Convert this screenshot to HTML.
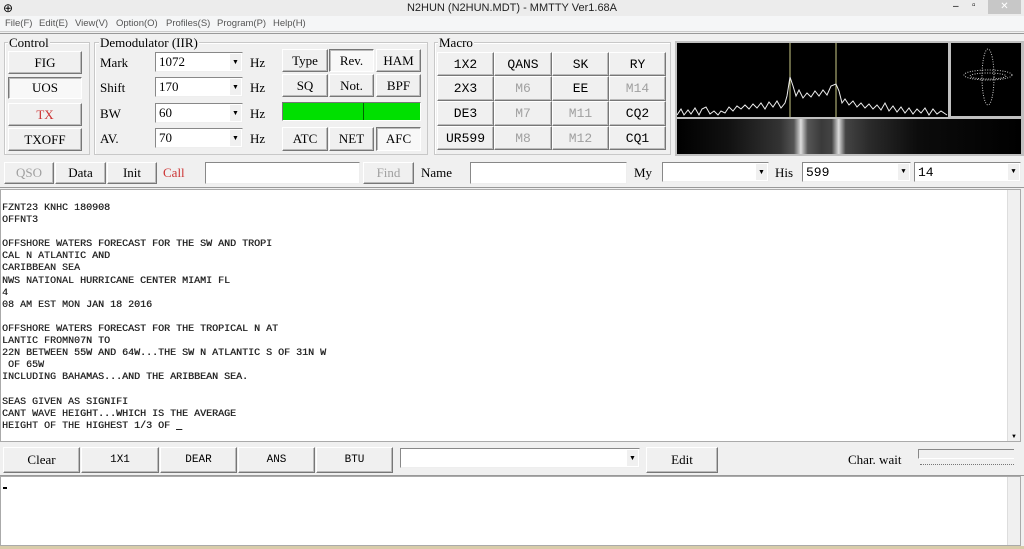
<!DOCTYPE html>
<html><head><style>
*{box-sizing:border-box;margin:0;padding:0}
body{width:1024px;height:549px;overflow:hidden;background:#f0f0f0;font-family:"Liberation Serif",serif;font-size:13px;color:#000;position:relative}
.a{position:absolute}
.btn{position:absolute;background:#f0f0f0;border:1px solid;border-color:#fff #777 #777 #fff;box-shadow:inset -1px -1px 0 #bbb;display:flex;align-items:center;justify-content:center;font-size:13px}
.dn{background:#f8f8f8;border-color:#777 #fff #fff #777;box-shadow:inset 1px 1px 0 #bbb}
.mono{font-family:"Liberation Mono",monospace}
.gr{color:#a0a0a0}
.grp{position:absolute;border:1px solid #c8c8c8;box-shadow:1px 1px 0 #fff inset}
.gl{position:absolute;background:#f0f0f0;font-size:13px;padding:0 1px;line-height:13px}
.inp{position:absolute;background:#fff;border:1px solid;border-color:#888 #eee #eee #888;font-size:13px;padding-left:3px;display:flex;align-items:center}
.ar{position:absolute;right:1px;top:1px;bottom:1px;width:11px;background:#f0f0f0;font-size:7px;display:flex;align-items:center;justify-content:center}
pre{font-family:"Liberation Mono",monospace;font-size:10px;line-height:12.1px;color:#222;text-shadow:0.3px 0 0 #444}
</style></head><body>
<div class="a" style="left:0;top:0;width:1024px;height:16px;background:#ececec;font-family:'Liberation Sans',sans-serif;font-size:11px">
<div class="a" style="left:3px;top:1px;font-size:12px">⊕</div>
<div class="a" style="left:0;width:1024px;top:2px;text-align:center;color:#222">N2HUN (N2HUN.MDT) - MMTTY Ver1.68A</div>
<div class="a" style="left:953px;top:1px;font-size:10px">–</div>
<div class="a" style="left:972px;top:0px;font-size:10px">▫</div>
<div class="a" style="left:988px;top:0;width:33px;height:14px;background:#c7c7c7;color:#fff;text-align:center;font-size:10px;line-height:14px">✕</div>
</div>
<div class="a" style="left:0;top:16px;width:1024px;height:16px;background:#f5f6f7;border-bottom:1px solid #ccc;font-family:'Liberation Sans',sans-serif;font-size:9.5px;color:#555;line-height:15px">
<span class="a" style="left:5px">File(F)</span><span class="a" style="left:39px">Edit(E)</span><span class="a" style="left:75px">View(V)</span><span class="a" style="left:116px">Option(O)</span><span class="a" style="left:166px">Profiles(S)</span><span class="a" style="left:217px">Program(P)</span><span class="a" style="left:273px">Help(H)</span></div>
<div class="a" style="left:0;top:33px;width:1024px;height:1px;background:#999"></div>

<div class="grp" style="left:4px;top:42px;width:86px;height:113px"></div>
<div class="gl" style="left:8px;top:36px">Control</div>
<div class="btn" style="left:8px;top:51px;width:74px;height:23px">FIG</div>
<div class="btn dn" style="left:8px;top:77px;width:74px;height:22px">UOS</div>
<div class="btn" style="left:8px;top:103px;width:74px;height:23px;color:#c33">TX</div>
<div class="btn" style="left:8px;top:128px;width:74px;height:23px">TXOFF</div>

<div class="grp" style="left:94px;top:42px;width:334px;height:113px"></div>
<div class="gl" style="left:99px;top:36px">Demodulator (IIR)</div>
<div class="a" style="left:100px;top:55px">Mark</div>
<div class="a" style="left:100px;top:80px">Shift</div>
<div class="a" style="left:100px;top:106px">BW</div>
<div class="a" style="left:100px;top:131px">AV.</div>
<div class="inp" style="left:155px;top:52px;width:88px;height:20px">1072<div class="ar">▼</div></div>
<div class="inp" style="left:155px;top:77px;width:88px;height:20px">170<div class="ar">▼</div></div>
<div class="inp" style="left:155px;top:103px;width:88px;height:20px">60<div class="ar">▼</div></div>
<div class="inp" style="left:155px;top:128px;width:88px;height:20px">70<div class="ar">▼</div></div>
<div class="a" style="left:250px;top:55px">Hz</div>
<div class="a" style="left:250px;top:80px">Hz</div>
<div class="a" style="left:250px;top:106px">Hz</div>
<div class="a" style="left:250px;top:131px">Hz</div>
<div class="btn" style="left:282px;top:49px;width:46px;height:23px">Type</div>
<div class="btn dn" style="left:329px;top:49px;width:45px;height:23px">Rev.</div>
<div class="btn" style="left:376px;top:49px;width:45px;height:23px">HAM</div>
<div class="btn" style="left:282px;top:74px;width:46px;height:23px">SQ</div>
<div class="btn" style="left:329px;top:74px;width:45px;height:23px">Not.</div>
<div class="btn" style="left:376px;top:74px;width:45px;height:23px">BPF</div>
<div class="a" style="left:282px;top:102px;width:139px;height:19px;background:#00e000;border:1px solid;border-color:#777 #fff #fff #777"></div>
<div class="a" style="left:363px;top:103px;width:1px;height:17px;background:#060"></div>
<div class="btn" style="left:282px;top:127px;width:46px;height:24px">ATC</div>
<div class="btn" style="left:329px;top:127px;width:45px;height:24px">NET</div>
<div class="btn dn" style="left:376px;top:127px;width:45px;height:24px">AFC</div>

<div class="grp" style="left:434px;top:42px;width:237px;height:113px"></div>
<div class="gl" style="left:438px;top:36px">Macro</div>
<div class="btn mono" style="left:437px;top:52px;width:57px;height:24px">1X2</div>
<div class="btn mono" style="left:494px;top:52px;width:58px;height:24px">QANS</div>
<div class="btn mono" style="left:552px;top:52px;width:57px;height:24px">SK</div>
<div class="btn mono" style="left:609px;top:52px;width:57px;height:24px">RY</div>
<div class="btn mono" style="left:437px;top:76px;width:57px;height:25px">2X3</div>
<div class="btn mono gr" style="left:494px;top:76px;width:58px;height:25px">M6</div>
<div class="btn mono" style="left:552px;top:76px;width:57px;height:25px">EE</div>
<div class="btn mono gr" style="left:609px;top:76px;width:57px;height:25px">M14</div>
<div class="btn mono" style="left:437px;top:101px;width:57px;height:25px">DE3</div>
<div class="btn mono gr" style="left:494px;top:101px;width:58px;height:25px">M7</div>
<div class="btn mono gr" style="left:552px;top:101px;width:57px;height:25px">M11</div>
<div class="btn mono" style="left:609px;top:101px;width:57px;height:25px">CQ2</div>
<div class="btn mono" style="left:437px;top:126px;width:57px;height:24px">UR599</div>
<div class="btn mono gr" style="left:494px;top:126px;width:58px;height:24px">M8</div>
<div class="btn mono gr" style="left:552px;top:126px;width:57px;height:24px">M12</div>
<div class="btn mono" style="left:609px;top:126px;width:57px;height:24px">CQ1</div>

<svg class="a" style="left:675px;top:41px" width="349" height="115">
<rect x="0" y="0" width="349" height="115" fill="#c0c0c0"/>
<rect x="2" y="2" width="271" height="74" fill="#000"/>
<rect x="276" y="2" width="70" height="73" fill="#000"/>
<rect x="2" y="78" width="344" height="35" fill="#000"/>
<line x1="115" y1="2" x2="115" y2="76" stroke="#cc8" stroke-width="1"/>
<line x1="161" y1="2" x2="161" y2="76" stroke="#cc8" stroke-width="1"/>
<polyline fill="none" stroke="#eee" stroke-width="1" points="2,74 6,68 9,74 13,69 16,73 20,67 24,74 27,68 31,66 35,73 39,70 43,74 46,70 50,72 54,66 58,70 62,65 66,68 70,64 74,68 78,63 82,67 86,62 90,68 94,61 98,66 102,60 106,67 110,62 112,55 115,36 118,45 121,55 124,49 128,57 132,52 136,56 140,50 144,55 148,49 152,54 156,45 161,43 164,50 167,62 170,58 174,64 178,60 182,66 186,62 190,67 194,63 198,68 202,64 206,69 210,62 214,70 218,65 222,71 226,66 230,72 234,67 238,73 242,68 246,72 250,67 254,74 258,68 262,73 266,70 272,74"/>
<g fill="none" stroke="#ccc" stroke-dasharray="1 1.5">
<ellipse cx="313" cy="34" rx="24" ry="5"/>
<ellipse cx="313" cy="36" rx="6" ry="28"/>
<ellipse cx="313" cy="35" rx="18" ry="3"/>
</g>
<defs><linearGradient id="w" x1="0" x2="1">
<stop offset="0" stop-color="#000"/><stop offset="0.15" stop-color="#111"/><stop offset="0.3" stop-color="#333"/><stop offset="0.34" stop-color="#555"/><stop offset="0.36" stop-color="#ddd"/><stop offset="0.38" stop-color="#555"/><stop offset="0.42" stop-color="#3a3a3a"/><stop offset="0.45" stop-color="#444"/><stop offset="0.47" stop-color="#ddd"/><stop offset="0.49" stop-color="#444"/><stop offset="0.56" stop-color="#2a2a2a"/><stop offset="0.7" stop-color="#0c0c0c"/><stop offset="1" stop-color="#000"/></linearGradient></defs>
<rect x="2" y="78" width="344" height="35" fill="url(#w)"/>
</svg>

<div class="btn gr" style="left:4px;top:162px;width:50px;height:22px">QSO</div>
<div class="btn" style="left:55px;top:162px;width:51px;height:22px">Data</div>
<div class="btn" style="left:107px;top:162px;width:50px;height:22px">Init</div>
<div class="a" style="left:163px;top:165px;color:#c33">Call</div>
<div class="inp" style="left:205px;top:162px;width:155px;height:22px"></div>
<div class="btn gr" style="left:363px;top:162px;width:51px;height:22px">Find</div>
<div class="a" style="left:421px;top:165px">Name</div>
<div class="inp" style="left:470px;top:162px;width:157px;height:22px"></div>
<div class="a" style="left:634px;top:165px">My</div>
<div class="inp" style="left:662px;top:162px;width:107px;height:20px"><div class="ar">▼</div></div>
<div class="a" style="left:775px;top:165px">His</div>
<div class="inp mono" style="left:802px;top:162px;width:109px;height:20px">599<div class="ar">▼</div></div>
<div class="inp mono" style="left:914px;top:162px;width:107px;height:20px">14<div class="ar">▼</div></div>
<div class="a" style="left:0;top:187px;width:1024px;height:1px;background:#999"></div>

<div class="a" style="left:0;top:189px;width:1021px;height:253px;background:#fff;border:1px solid #aaa">
<pre class="a" style="left:1px;top:13px">FZNT23 KNHC 180908
OFFNT3

OFFSHORE WATERS FORECAST FOR THE SW AND TROPI
CAL N ATLANTIC AND
CARIBBEAN SEA
NWS NATIONAL HURRICANE CENTER MIAMI FL
4
08 AM EST MON JAN 18 2016

OFFSHORE WATERS FORECAST FOR THE TROPICAL N AT
LANTIC FROMN07N TO
22N BETWEEN 55W AND 64W...THE SW N ATLANTIC S OF 31N W
 OF 65W
INCLUDING BAHAMAS...AND THE ARIBBEAN SEA.

SEAS GIVEN AS SIGNIFI
CANT WAVE HEIGHT...WHICH IS THE AVERAGE
HEIGHT OF THE HIGHEST 1/3 OF <b style="text-decoration:underline">&nbsp;</b></pre>
<div class="a" style="right:0;top:0;width:13px;height:251px;background:#f0f0f0;border-left:1px solid #ddd"><div class="a" style="bottom:1px;left:3px;font-size:6px">▼</div></div>
</div>

<div class="btn" style="left:3px;top:447px;width:77px;height:26px">Clear</div>
<div class="btn mono" style="left:81px;top:447px;width:78px;height:26px;font-size:11px">1X1</div>
<div class="btn mono" style="left:160px;top:447px;width:77px;height:26px;font-size:11px">DEAR</div>
<div class="btn mono" style="left:238px;top:447px;width:77px;height:26px;font-size:11px">ANS</div>
<div class="btn mono" style="left:316px;top:447px;width:77px;height:26px;font-size:11px">BTU</div>
<div class="inp" style="left:400px;top:448px;width:240px;height:20px"><div class="ar">▼</div></div>
<div class="btn" style="left:646px;top:447px;width:72px;height:26px">Edit</div>
<div class="a" style="left:848px;top:452px">Char. wait</div>
<div class="a" style="left:918px;top:449px;width:96px;height:10px;border:1px solid;border-color:#888 #fff #fff #888;border-right:none"></div>
<div class="a" style="left:920px;top:464px;width:94px;height:3px;border-top:1px dotted #777"></div>
<div class="a" style="left:0;top:475px;width:1024px;height:1px;background:#999"></div>
<div class="a" style="left:0;top:476px;width:1021px;height:70px;background:#fff;border:1px solid #aaa">
<div class="a" style="left:2px;top:10px;width:4px;height:2px;background:#000"></div>
<div class="a" style="right:0;top:0;width:13px;height:68px;background:#f0f0f0;border-left:1px solid #ddd"></div>
</div>
<div class="a" style="left:0;top:546px;width:1024px;height:3px;background:#d8ccaa"></div>
</body></html>
